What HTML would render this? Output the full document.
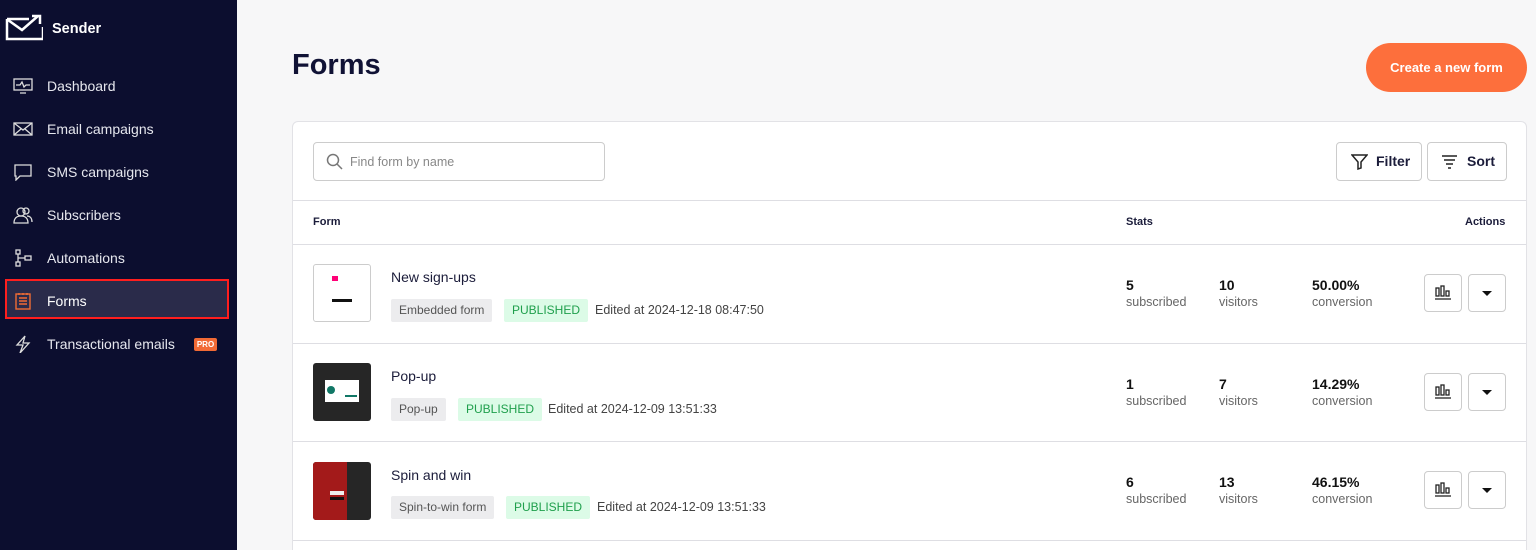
<!DOCTYPE html>
<html><head><meta charset="utf-8">
<style>
*{margin:0;padding:0;box-sizing:border-box}
html,body{width:1536px;height:550px;overflow:hidden}
body{background:#f7f7f8;font-family:"Liberation Sans",sans-serif;position:relative;color:#1b1c3a}
.sb{position:absolute;left:0;top:0;width:237px;height:550px;background:#0c0e2f}
.nav{position:absolute;left:0;width:237px;height:40px;color:#e6e7ee;font-size:14px}
.nav span{position:absolute;left:47px;top:12px}
.nav svg{position:absolute;left:13px;top:11px}
.a{position:absolute}
.card{position:absolute;left:292px;top:121px;width:1235px;height:429px;background:#fff;border:1px solid #e2e2e6;border-bottom:none;border-radius:6px 6px 0 0;overflow:hidden}
.hl{position:absolute;left:0;width:1233px;height:1px;background:#dedee3}
.tag{position:absolute;height:23px;line-height:23px;font-size:12px;padding:0 8px;border-radius:2px}
.g{background:#ececee;color:#555}
.p{background:#dcfbe7;color:#1f9f4c}
.ed{position:absolute;font-size:12.5px;color:#444}
.nm{position:absolute;font-size:14px;color:#1b1c3a}
.big{position:absolute;font-size:14px;font-weight:bold;color:#111}
.sm{position:absolute;font-size:12.5px;color:#666}
.btn{position:absolute;width:38px;height:38px;border:1px solid #ccc;border-radius:4px;background:#fff}
</style></head><body>
<div class="sb">
 <svg class="a" style="left:5px;top:13px" width="38" height="28" viewBox="0 0 38 28" fill="none" stroke="#fff" stroke-width="2.5"><path d="M2 6V26H38V14"/><path d="M2 6H24"/><path d="M3 7L17 17L33 3"/><path d="M27 3H35V11"/></svg>
 <div class="a" style="left:52px;top:21px;color:#fff;font-size:14.5px;font-weight:bold">Sender</div>
 <div class="nav" style="top:66px"><svg width="20" height="18" fill="none" stroke="#ddd" stroke-width="1.3"><rect x="1" y="2" width="18" height="11"/><path d="M3 8h4l2-3 2 5 2-2h4M7 16h6"/></svg><span>Dashboard</span></div>
 <div class="nav" style="top:109px"><svg width="20" height="18" fill="none" stroke="#ddd" stroke-width="1.3"><rect x="1" y="3" width="18" height="12"/><path d="M1 3l9 7 9-7M1 15l7-6M19 15l-7-6"/></svg><span>Email campaigns</span></div>
 <div class="nav" style="top:152px"><svg width="20" height="18" fill="none" stroke="#ddd" stroke-width="1.3"><path d="M2 2h16v11H7l-4 4v-4H2z"/></svg><span>SMS campaigns</span></div>
 <div class="nav" style="top:195px"><svg width="20" height="18" fill="none" stroke="#ddd" stroke-width="1.3"><circle cx="8" cy="6" r="4"/><circle cx="13" cy="5" r="3"/><path d="M1 17c0-5 3-7 7-7s7 2 7 7zM14 10c3 0 5 2 5 6"/></svg><span>Subscribers</span></div>
 <div class="nav" style="top:238px"><svg width="20" height="18" fill="none" stroke="#ddd" stroke-width="1.3"><rect x="3" y="1" width="4" height="4"/><rect x="3" y="13" width="4" height="4"/><rect x="12" y="7" width="6" height="4"/><path d="M5 5v8M5 9h7"/></svg><span>Automations</span></div>
 <div class="a" style="left:5px;top:279px;width:224px;height:40px;background:#2a2b4a;border:2px solid #ff1e1e"></div>
 <div class="nav" style="top:281px"><svg width="20" height="18" fill="none" stroke="#ef6b34" stroke-width="1.4"><rect x="3" y="2" width="14" height="15"/><path d="M6 6h8M6 9h8M6 12h8M6 1v2M10 1v2M14 1v2"/></svg><span style="color:#fff">Forms</span></div>
 <div class="nav" style="top:324px"><svg width="20" height="18" fill="none" stroke="#ddd" stroke-width="1.3"><path d="M12 1L4 10h6l-3 8 9-10h-6z"/></svg><span>Transactional emails</span></div>
 <div class="a" style="left:194px;top:338px;width:23px;height:13px;background:#f26a35;border-radius:2px;color:#fff;font-size:8px;font-weight:bold;text-align:center;line-height:13px">PRO</div>
</div>

<div class="a" style="left:292px;top:49px;font-size:29px;font-weight:bold;color:#101235">Forms</div>
<div class="a" style="left:1366px;top:43px;width:161px;height:49px;border-radius:25px;background:#fd6f3c;color:#fff;font-size:13px;font-weight:bold;text-align:center;line-height:49px">Create a new form</div>

<div class="card">
 <div class="a" style="left:20px;top:20px;width:292px;height:39px;border:1px solid #ccc;border-radius:4px"></div>
 <svg class="a" style="left:33px;top:31px" width="17" height="17" fill="none" stroke="#777" stroke-width="1.5"><circle cx="7" cy="7" r="5.5"/><path d="M11 11l5 5"/></svg>
 <div class="a" style="left:57px;top:33px;font-size:12.5px;color:#888">Find form by name</div>
 <div class="a" style="left:1043px;top:20px;width:86px;height:39px;border:1px solid #ccc;border-radius:4px"></div>
 <svg class="a" style="left:1058px;top:31px" width="17" height="17" fill="none" stroke="#222" stroke-width="1.5"><path d="M1 2h15l-6 7v6l-3 1V9z"/></svg>
 <div class="a" style="left:1083px;top:31px;font-size:14px;font-weight:bold">Filter</div>
 <div class="a" style="left:1134px;top:20px;width:80px;height:39px;border:1px solid #ccc;border-radius:4px"></div>
 <svg class="a" style="left:1148px;top:31px" width="17" height="17" fill="none" stroke="#222" stroke-width="1.5"><path d="M1 3h15M3 7h11M5 11h7M7 15h3"/></svg>
 <div class="a" style="left:1174px;top:31px;font-size:14px;font-weight:bold">Sort</div>
 <div class="hl" style="top:78px"></div>
 <div class="a" style="left:20px;top:94px;font-size:11px;font-weight:bold">Form</div>
 <div class="a" style="left:833px;top:94px;font-size:11px;font-weight:bold">Stats</div>
 <div class="a" style="left:1172px;top:94px;font-size:11px;font-weight:bold">Actions</div>
 <div class="hl" style="top:122px"></div>

 <div class="a" style="left:20px;top:142px;width:58px;height:58px;border:1px solid #ccc;border-radius:3px;background:#fff"><div class="a" style="left:18px;top:11px;width:6px;height:5px;background:#f07"></div><div class="a" style="left:18px;top:34px;width:20px;height:3px;background:#111"></div></div>
 <div class="nm" style="left:98px;top:147px">New sign-ups</div>
 <div class="tag g" style="left:98px;top:177px">Embedded form</div>
 <div class="tag p" style="left:211px;top:177px">PUBLISHED</div>
 <div class="ed" style="left:302px;top:181px">Edited at 2024-12-18 08:47:50</div>
 <div class="big" style="left:833px;top:155px">5</div><div class="sm" style="left:833px;top:173px">subscribed</div>
 <div class="big" style="left:926px;top:155px">10</div><div class="sm" style="left:926px;top:173px">visitors</div>
 <div class="big" style="left:1019px;top:155px">50.00%</div><div class="sm" style="left:1019px;top:173px">conversion</div>
 <div class="hl" style="top:221px"></div>

 <div class="a" style="left:20px;top:241px;width:58px;height:58px;border-radius:3px;background:#262626"><div class="a" style="left:12px;top:17px;width:34px;height:22px;background:#fff"><div class="a" style="left:2px;top:6px;width:8px;height:8px;border-radius:50%;background:#176"></div><div class="a" style="left:20px;top:15px;width:12px;height:2px;background:#176"></div></div></div>
 <div class="nm" style="left:98px;top:246px">Pop-up</div>
 <div class="tag g" style="left:98px;top:276px">Pop-up</div>
 <div class="tag p" style="left:165px;top:276px">PUBLISHED</div>
 <div class="ed" style="left:255px;top:280px">Edited at 2024-12-09 13:51:33</div>
 <div class="big" style="left:833px;top:254px">1</div><div class="sm" style="left:833px;top:272px">subscribed</div>
 <div class="big" style="left:926px;top:254px">7</div><div class="sm" style="left:926px;top:272px">visitors</div>
 <div class="big" style="left:1019px;top:254px">14.29%</div><div class="sm" style="left:1019px;top:272px">conversion</div>
 <div class="hl" style="top:319px"></div>

 <div class="a" style="left:20px;top:340px;width:58px;height:58px;border-radius:3px;background:#262626;overflow:hidden"><div class="a" style="left:0;top:0;width:34px;height:58px;background:#a31a1a"></div><div class="a" style="left:17px;top:29px;width:14px;height:4px;background:#eee"></div><div class="a" style="left:17px;top:35px;width:14px;height:3px;background:#111"></div></div>
 <div class="nm" style="left:98px;top:345px">Spin and win</div>
 <div class="tag g" style="left:98px;top:374px">Spin-to-win form</div>
 <div class="tag p" style="left:213px;top:374px">PUBLISHED</div>
 <div class="ed" style="left:304px;top:378px">Edited at 2024-12-09 13:51:33</div>
 <div class="big" style="left:833px;top:352px">6</div><div class="sm" style="left:833px;top:370px">subscribed</div>
 <div class="big" style="left:926px;top:352px">13</div><div class="sm" style="left:926px;top:370px">visitors</div>
 <div class="big" style="left:1019px;top:352px">46.15%</div><div class="sm" style="left:1019px;top:370px">conversion</div>
 <div class="hl" style="top:418px"></div>
</div>

<div class="btn" style="left:1424px;top:274px"></div><div class="btn" style="left:1468px;top:274px"></div>
<div class="btn" style="left:1424px;top:373px"></div><div class="btn" style="left:1468px;top:373px"></div>
<div class="btn" style="left:1424px;top:471px"></div><div class="btn" style="left:1468px;top:471px"></div>
<svg class="a" style="left:1434px;top:285px" width="18" height="16" fill="none" stroke="#222" stroke-width="1.3"><rect x="2" y="3" width="3" height="8"/><rect x="7" y="1" width="3" height="10"/><rect x="12" y="6" width="3" height="5"/><path d="M1 14h16"/></svg>
<svg class="a" style="left:1434px;top:384px" width="18" height="16" fill="none" stroke="#222" stroke-width="1.3"><rect x="2" y="3" width="3" height="8"/><rect x="7" y="1" width="3" height="10"/><rect x="12" y="6" width="3" height="5"/><path d="M1 14h16"/></svg>
<svg class="a" style="left:1434px;top:482px" width="18" height="16" fill="none" stroke="#222" stroke-width="1.3"><rect x="2" y="3" width="3" height="8"/><rect x="7" y="1" width="3" height="10"/><rect x="12" y="6" width="3" height="5"/><path d="M1 14h16"/></svg>
<svg class="a" style="left:1481px;top:290px" width="12" height="7"><path d="M1 1h10L6 6z" fill="#111"/></svg>
<svg class="a" style="left:1481px;top:389px" width="12" height="7"><path d="M1 1h10L6 6z" fill="#111"/></svg>
<svg class="a" style="left:1481px;top:487px" width="12" height="7"><path d="M1 1h10L6 6z" fill="#111"/></svg>
</body></html>
